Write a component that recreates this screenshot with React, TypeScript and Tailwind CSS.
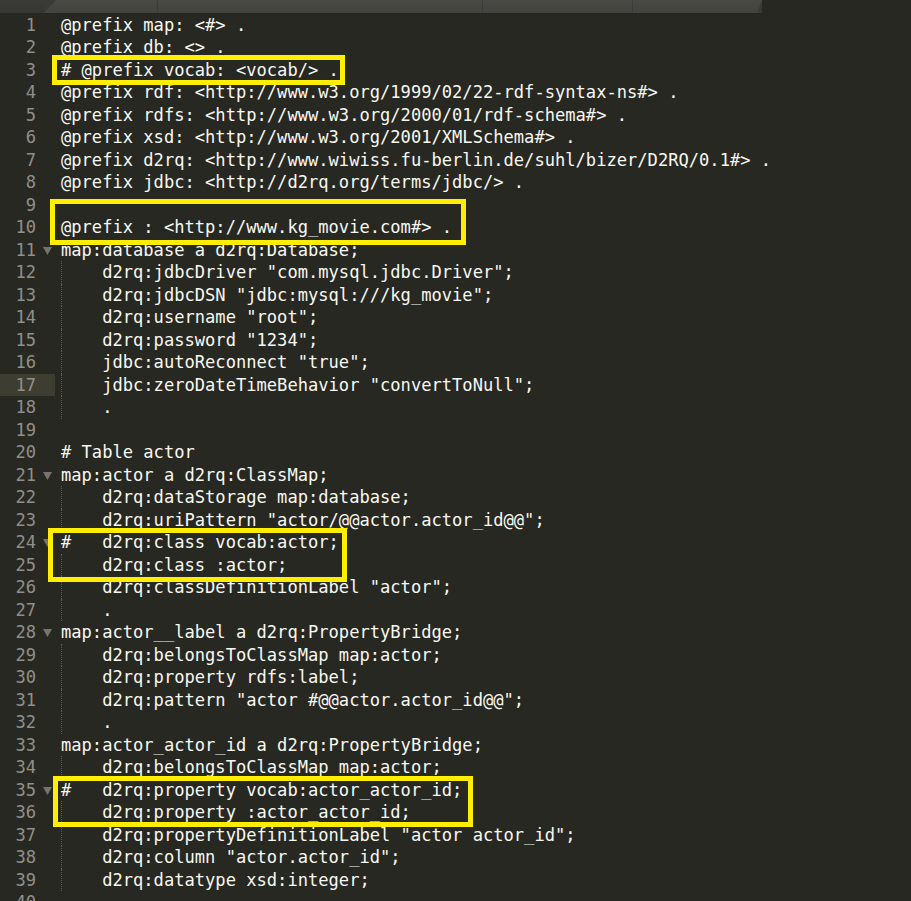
import React from "react";

const lines: string[] = [
  "@prefix map: <#> .",
  "@prefix db: <> .",
  "# @prefix vocab: <vocab/> .",
  "@prefix rdf: <http://www.w3.org/1999/02/22-rdf-syntax-ns#> .",
  "@prefix rdfs: <http://www.w3.org/2000/01/rdf-schema#> .",
  "@prefix xsd: <http://www.w3.org/2001/XMLSchema#> .",
  "@prefix d2rq: <http://www.wiwiss.fu-berlin.de/suhl/bizer/D2RQ/0.1#> .",
  "@prefix jdbc: <http://d2rq.org/terms/jdbc/> .",
  "",
  "@prefix : <http://www.kg_movie.com#> .",
  "map:database a d2rq:Database;",
  '    d2rq:jdbcDriver "com.mysql.jdbc.Driver";',
  '    d2rq:jdbcDSN "jdbc:mysql:///kg_movie";',
  '    d2rq:username "root";',
  '    d2rq:password "1234";',
  '    jdbc:autoReconnect "true";',
  '    jdbc:zeroDateTimeBehavior "convertToNull";',
  "    .",
  "",
  "# Table actor",
  "map:actor a d2rq:ClassMap;",
  "    d2rq:dataStorage map:database;",
  '    d2rq:uriPattern "actor/@@actor.actor_id@@";',
  "#   d2rq:class vocab:actor;",
  "    d2rq:class :actor;",
  '    d2rq:classDefinitionLabel "actor";',
  "    .",
  "map:actor__label a d2rq:PropertyBridge;",
  "    d2rq:belongsToClassMap map:actor;",
  "    d2rq:property rdfs:label;",
  '    d2rq:pattern "actor #@@actor.actor_id@@";',
  "    .",
  "map:actor_actor_id a d2rq:PropertyBridge;",
  "    d2rq:belongsToClassMap map:actor;",
  "#   d2rq:property vocab:actor_actor_id;",
  "    d2rq:property :actor_actor_id;",
  '    d2rq:propertyDefinitionLabel "actor actor_id";',
  '    d2rq:column "actor.actor_id";',
  "    d2rq:datatype xsd:integer;",
  "",
];

const folds = new Set([11, 21, 24, 28, 35]);

function FoldArrow() {
  return (
    <svg width="9" height="9" viewBox="0 0 9 9" className="block">
      <path d="M0 1 L9 1 L4.5 9 Z" fill="#75756f" />
    </svg>
  );
}

function TabBar() {
  return (
    <div className="flex h-[13px] bg-[#3a3a36] overflow-hidden">
      <div className="w-[44px] shrink-0 bg-[linear-gradient(to_bottom,#3b3b37,#363632)]" />
      <div className="w-[718px] shrink-0 flex bg-[linear-gradient(to_bottom,#4a4a45,#42423e)] [clip-path:polygon(12px_0,100%_0,calc(100%-5px)_100%,0_100%)]">
        <div className="w-[113px] shrink-0" />
        <div className="w-[325px] shrink-0 border-l border-[#3c3c38]" />
        <div className="w-[150px] shrink-0 border-l border-[#3c3c38]" />
        <div className="flex-1 border-l border-[#3c3c38]" />
      </div>
      <div className="flex-1 bg-[#272822]" />
    </div>
  );
}

export default function App() {
  return (
    <div className="relative w-[911px] h-[901px] overflow-hidden bg-[#272822] font-['DejaVu_Sans_Mono','Liberation_Mono',monospace] text-[17.1px]">
      <TabBar />
      <div className="pt-[0.8px]">
        {lines.map((text, i) => {
          const n = i + 1;
          const hl = n === 17;
          const indented = text.startsWith("    ");
          return (
            <div key={n} className="flex h-[22.5px] leading-[22.5px]">
              <div className={`w-[55px] shrink-0 flex ${hl ? "bg-[#3e3d32]" : ""}`}>
                <span className="w-[36px] text-right text-[#90908a]">{n}</span>
                <span className="w-[19px] flex items-center pl-[7px]">
                  {folds.has(n) ? <FoldArrow /> : null}
                </span>
              </div>
              <div className="relative pl-[6px] whitespace-pre text-[#f8f8f2]">
                {indented ? (
                  <span className="absolute left-[6px] top-0 bottom-0 border-l border-dotted border-[#5c5c56]" />
                ) : null}
                {text}
              </div>
            </div>
          );
        })}
      </div>
      <div className="absolute left-[52px] top-[55px] w-[293px] h-[30px] border-[5px] border-[#ffee00]" />
      <div className="absolute left-[50px] top-[199px] w-[416px] h-[46px] border-[5px] border-[#ffee00]" />
      <div className="absolute left-[48px] top-[528px] w-[299px] h-[54px] border-[5px] border-[#ffee00]" />
      <div className="absolute left-[53px] top-[776px] w-[420px] h-[51px] border-[5px] border-[#ffee00]" />
    </div>
  );
}
